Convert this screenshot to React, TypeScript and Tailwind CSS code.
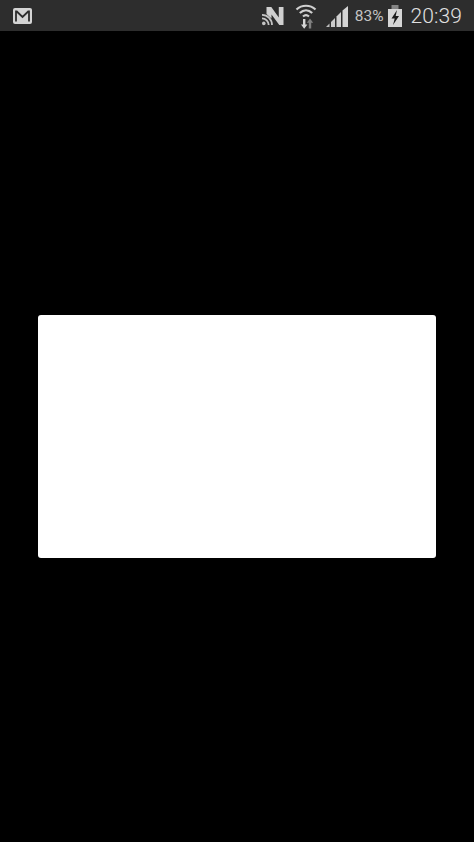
import React from "react";

function GmailIcon() {
  return (
    <svg width="19" height="16" viewBox="0 0 19 16" className="block">
      <rect x="0" y="0" width="19" height="16" rx="2" fill="#d4d4d4" />
      <path d="M3 13.500V3.500h.8L9.500 9l5.700-5.500h.8v10" stroke="#2d2d2d" strokeWidth="1.800" fill="none" />
    </svg>
  );
}

function NfcIcon() {
  return (
    <svg width="22" height="20" viewBox="0 0 22 20" className="block">
      <path d="M4.500 1h4.800L16.800 11.500V1h4.700v18h-4.200L9.500 8.500V12.500L4.500 8z" fill="#d0d0d0" />
      <path d="M0 8.800c5.600 0 10 4.600 10 10.200" stroke="#c4c4c4" strokeWidth="1.800" fill="none" />
      <path d="M0 12.300c3.700 0 6.700 3 6.700 6.700" stroke="#c4c4c4" strokeWidth="1.800" fill="none" />
      <circle cx="1.800" cy="17.400" r="1.800" fill="#c4c4c4" />
    </svg>
  );
}

function WifiIcon() {
  return (
    <svg width="22" height="26" viewBox="0 0 22 26" className="block">
      <path d="M1.500 6.500C6.800 1.500 15.200 1.500 20.500 6.500" stroke="#d0d0d0" strokeWidth="2.200" fill="none" />
      <path d="M4.800 10C8.500 6.600 13.500 6.600 17.200 10" stroke="#d0d0d0" strokeWidth="2.200" fill="none" />
      <path d="M8 13.500c1.800-1.600 4.200-1.600 6 0" stroke="#d0d0d0" strokeWidth="2.200" fill="none" />
      <path d="M8 16h2.400v5.500h2L9.200 25.800 6 21.500h2z" fill="#d6d6d6" />
      <path d="M15 15.500l3.200 4.300h-2v5.700h-2.400v-5.700h-2z" fill="#808080" />
    </svg>
  );
}

function SignalIcon() {
  return (
    <svg width="22" height="21" viewBox="0 0 22 21" className="block">
      <path d="M0 21l3.500-3.500V21z" fill="#bdbdbd" />
      <path d="M5 21v-5l4-4v9z" fill="#c9c9c9" />
      <path d="M10.500 21V10.500l4.500-4.500v15z" fill="#cfcfcf" />
      <path d="M16.500 21V4.500L22 0v21z" fill="#d4d4d4" />
    </svg>
  );
}

function BatteryIcon() {
  return (
    <svg width="14" height="22" viewBox="0 0 14 22" className="block">
      <rect x="3.500" y="0" width="7" height="6" fill="#858585" />
      <rect x="0" y="4" width="14" height="18" fill="#d6d6d6" />
      <path d="M9 5L3.500 13.500h3.200L5 20l6-9H7.700z" fill="#1c1c1c" />
    </svg>
  );
}

export default function App() {
  return (
    <div className="flex h-[842px] w-full flex-col overflow-hidden bg-black font-['Roboto',sans-serif]">
      <div className="flex h-[31px] items-center justify-between bg-[#2d2d2d] pt-px pl-[13px] pr-[12px]">
        <GmailIcon />
        <div className="flex items-center">
          <NfcIcon />
          <div className="ml-[11px]">
            <WifiIcon />
          </div>
          <div className="ml-[9px]">
            <SignalIcon />
          </div>
          <span className="ml-[7px] mt-[2px] text-[15.500px] leading-none text-[#c4c4c4]">83%</span>
          <div className="ml-[5px]">
            <BatteryIcon />
          </div>
          <span className="ml-[8px] text-[21px] leading-none font-light tracking-[0.1px] text-[#e0e0e0]">20:39</span>
        </div>
      </div>
      <div className="px-[38px] pt-[284px]">
        <div className="h-[243px] rounded-[3px] bg-white" />
      </div>
    </div>
  );
}
